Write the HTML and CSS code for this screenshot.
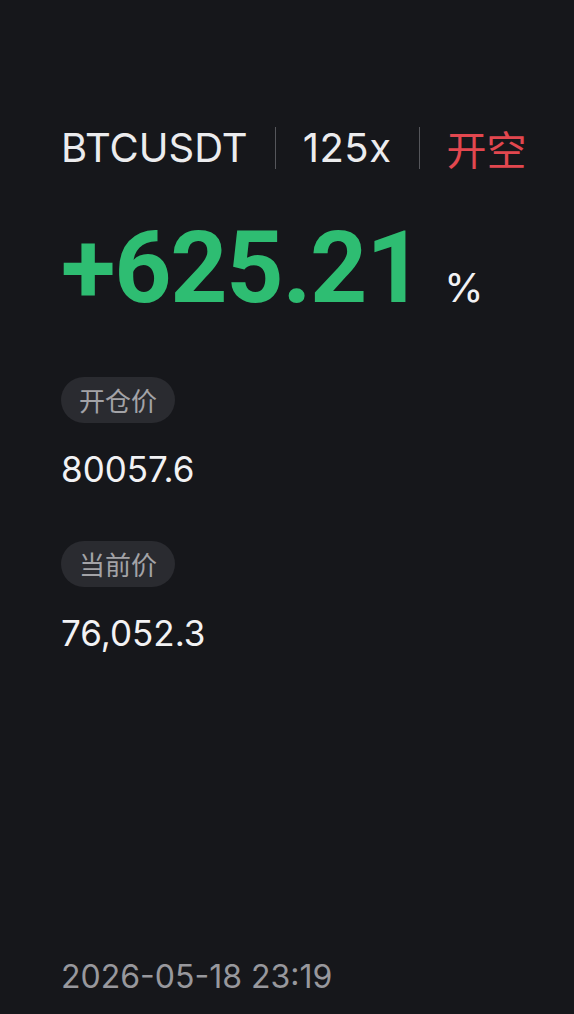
FILE: index.html
```html
<!DOCTYPE html>
<html lang="zh">
<head>
<meta charset="utf-8">
<link rel="stylesheet" href="styles.css">
</head>
<body>
<main class="card">
  <header class="head">
    <span class="sym">BTCUSDT</span>
    <span class="sep"></span>
    <span class="lev">125x</span>
    <span class="sep"></span>
    <span class="side">开空</span>
  </header>
  <div class="pnl"><span class="pnl-num">+625.21</span><span class="pct">%</span></div>
  <section class="field first">
    <span class="pill">开仓价</span>
    <span class="val">80057.6</span>
  </section>
  <section class="field">
    <span class="pill">当前价</span>
    <span class="val">76,052.3</span>
  </section>
  <footer class="date">2026-05-18 23:19</footer>
</main>
</body>
</html>
```
FILE: styles.css
```css
html, body {
  margin: 0;
  padding: 0;
  background: #16171b;
}
body {
  width: 574px;
  height: 1014px;
  overflow: hidden;
  font-family: Inter, "Noto Sans CJK SC", sans-serif;
  color: #ececee;
}
.card {
  display: flex;
  flex-direction: column;
  padding: 0 0 0 61px;
  height: 1014px;
  box-sizing: border-box;
}
.head {
  display: flex;
  align-items: center;
  margin-top: 126px;
  height: 44px;
}
.sym, .lev {
  font-size: 40px;
  line-height: 44px;
  letter-spacing: 0;
}
.lev { letter-spacing: 0.5px; }
.sep {
  width: 1px;
  height: 42px;
  background: #55565b;
  margin: 0 27px;
}
.side {
  color: #e2474f;
  font-size: 40px;
  line-height: 44px;
  font-family: "Noto Sans CJK SC", sans-serif;
}
.pnl {
  display: flex;
  align-items: baseline;
  margin-top: 48px;
  height: 100px;
}
.pnl-num {
  font-family: Roboto, sans-serif;
  font-size: 100px;
  font-weight: 700;
  color: #2ebd72;
  line-height: 100px;
  letter-spacing: -1.3px;
}
.pct {
  font-size: 40px;
  margin-left: 22px;
  color: #f2f2f4;
}
.field {
  display: flex;
  flex-direction: column;
  align-items: flex-start;
}
.field.first { margin-top: 59px; }
.field + .field { margin-top: 52px; }
.pill {
  background: #2a2b30;
  color: #a3a3a7;
  font-family: "Noto Sans CJK SC", sans-serif;
  font-size: 26px;
  line-height: 46px;
  height: 46px;
  padding: 0 18px;
  border-radius: 23px;
}
.val {
  margin-top: 26px;
  font-size: 35px;
  line-height: 40px;
  color: #f2f2f4;
}
.date {
  margin-top: auto;
  margin-bottom: 17px;
  font-size: 32px;
  line-height: 40px;
  color: #98989d;
}
```
